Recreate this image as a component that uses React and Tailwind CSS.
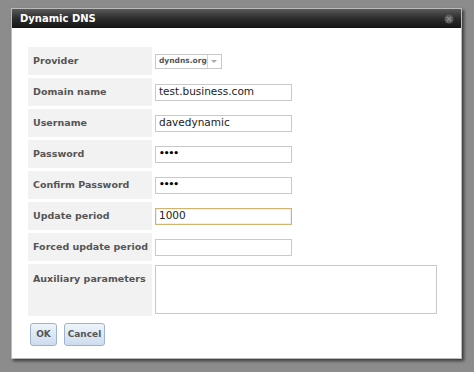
import React from 'react';

const rows = [
  { label: 'Provider', kind: 'select' },
  { label: 'Domain name', kind: 'text', value: 'test.business.com' },
  { label: 'Username', kind: 'text', value: 'davedynamic' },
  { label: 'Password', kind: 'pass', value: '••••' },
  { label: 'Confirm Password', kind: 'pass', value: '••••' },
  { label: 'Update period', kind: 'focus', value: '1000' },
  { label: 'Forced update period', kind: 'text', value: '' },
];

function Field({ row }) {
  if (row.kind === 'select') {
    return (
      <div className="flex h-[15px] w-[67px] border border-[#c8c8c8] bg-white">
        <div className="flex flex-1 items-center pl-[3px] text-[7.5px] font-bold text-[#555]">dyndns.org</div>
        <div className="flex w-[15px] items-center justify-center border-l border-[#d4d4d4]">
          <div className="h-0 w-0 border-x-[3px] border-t-[3px] border-x-transparent border-t-[#aaa]" />
        </div>
      </div>
    );
  }
  const border = row.kind === 'focus' ? 'border-[#cdb770] shadow-[inset_0_0_0_1px_#eee]' : 'border-[#c9c9c9]';
  return (
    <div className={`flex h-[17px] w-[137px] items-center border bg-white pl-[3px] ${border}`}>
      <span className={row.kind === 'pass' ? 'text-[9px] font-bold tracking-[-1px] text-black' : 'text-[10.5px] text-[#222]'}>
        {row.value}
      </span>
    </div>
  );
}

export default function App() {
  return (
    <div className="h-[372px] w-[474px] bg-[#8c8c8c] pl-[11px] pt-[8px]" style={{ fontFamily: '"DejaVu Sans", Verdana, sans-serif' }}>
      <div className="h-[351px] w-[451px] border border-[#bbb] bg-white shadow-[2px_2px_3px_rgba(0,0,0,0.6)]">
        {/* title bar */}
        <div className="flex h-[19px] items-center justify-between bg-gradient-to-b from-[#5a5a5a] via-[#2c2c2c] to-[#151515] pl-[8px] pr-[7px]">
          <span className="text-[10px] font-bold text-white">Dynamic DNS</span>
          <svg width="10" height="10" viewBox="0 0 10 10">
            <circle cx="5" cy="5" r="4.5" fill="#5c5c5c" />
            <path d="M3 3 L7 7 M7 3 L3 7" stroke="#8a8a8a" strokeWidth="1.3" />
          </svg>
        </div>
        <div className="flex flex-col gap-[3px] pl-[16px] pt-[19px]">
          {rows.map((row) => (
            <div key={row.label} className="flex gap-[3px]">
              <div className="flex h-[28px] w-[124px] items-center bg-[#f2f2f2] pl-[5px] text-[9.5px] font-bold text-[#555]">
                {row.label}
              </div>
              <div className="flex items-center">
                <Field row={row} />
              </div>
            </div>
          ))}
          <div className="flex gap-[3px]">
            <div className="flex h-[52px] w-[124px] items-start bg-[#f2f2f2] pl-[5px] text-[9.5px] font-bold text-[#555]">
              <span className="mt-[8px]">Auxiliary parameters</span>
            </div>
            <div className="pt-[1px]">
              <div className="h-[49px] w-[282px] border border-[#c9c9c9] bg-white" />
            </div>
          </div>
          <div className="mt-[4px] flex gap-[7px] pl-[2px]">
            <button className="h-[23px] w-[27px] rounded-[3px] border border-[#9fb3cc] bg-gradient-to-b from-[#eef4fb] to-[#cddcee] text-[9px] font-bold text-[#555]">
              OK
            </button>
            <button className="h-[23px] w-[41px] rounded-[3px] border border-[#9fb3cc] bg-gradient-to-b from-[#eef4fb] to-[#cddcee] text-[9px] font-bold text-[#555]">
              Cancel
            </button>
          </div>
        </div>
      </div>
    </div>
  );
}
